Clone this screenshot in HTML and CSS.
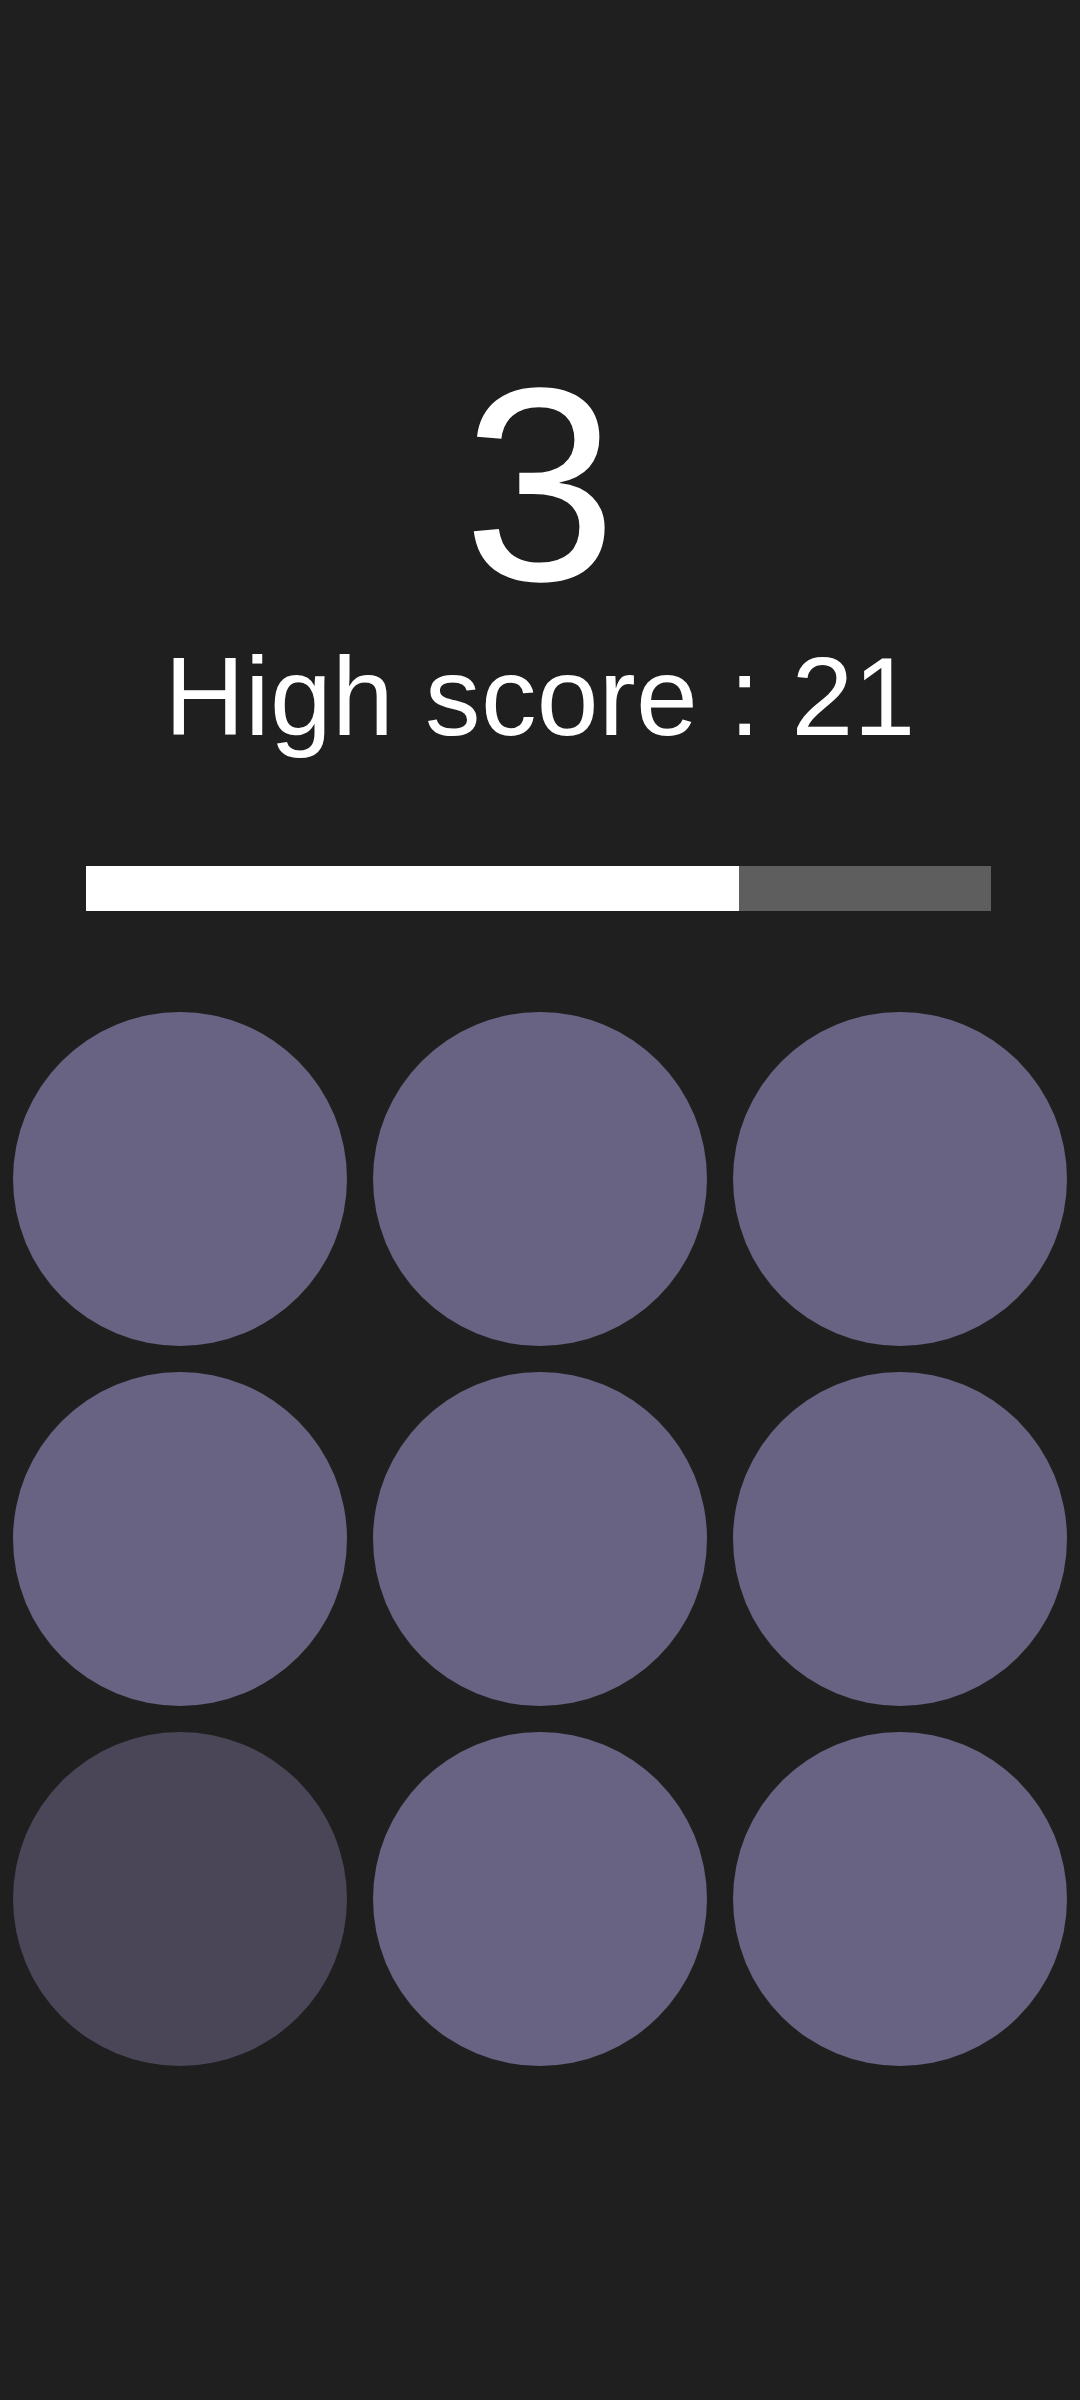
FILE: index.html
```html
<!DOCTYPE html>
<html lang="en">
<head>
<meta charset="utf-8">
<title>Memory Tiles</title>
<link rel="stylesheet" href="styles.css">
</head>
<body>
<main class="game">
  <div class="score">3</div>
  <div class="high-score">High score : 21</div>
  <div class="timer">
    <div class="timer-fill" style="width: 72.15%"></div>
  </div>
  <div class="board">
    <div class="tile"></div>
    <div class="tile"></div>
    <div class="tile"></div>
    <div class="tile"></div>
    <div class="tile"></div>
    <div class="tile"></div>
    <div class="tile tile-dim"></div>
    <div class="tile"></div>
    <div class="tile"></div>
  </div>
</main>
</body>
</html>
```

FILE: styles.css
```css
html, body {
  margin: 0;
  padding: 0;
  background: #1f1f1f;
}

.game {
  width: 1080px;
  height: 2400px;
  box-sizing: border-box;
  padding-top: 346px;
  display: flex;
  flex-direction: column;
  align-items: center;
  font-family: "Liberation Sans", Arial, sans-serif;
  color: #ffffff;
}

.score {
  font-size: 276px;
  line-height: 1;
  height: 276px;
}

.high-score {
  margin-top: 20px;
  font-size: 111px;
  line-height: 1;
  height: 111px;
  letter-spacing: 0.3px;
}

.timer {
  margin-top: 113px;
  margin-right: 3px;
  width: 905px;
  height: 45px;
  background: #5e5e5e;
  display: flex;
}

.timer-fill {
  height: 100%;
  background: #ffffff;
}

.board {
  margin-top: 101px;
  align-self: stretch;
  padding: 0 13px;
  display: grid;
  grid-template-columns: repeat(3, 334px);
  grid-auto-rows: 334px;
  gap: 26px;
}

.tile {
  border-radius: 50%;
  background: #686382;
}

.tile-dim {
  background: #4a4657;
}
```
